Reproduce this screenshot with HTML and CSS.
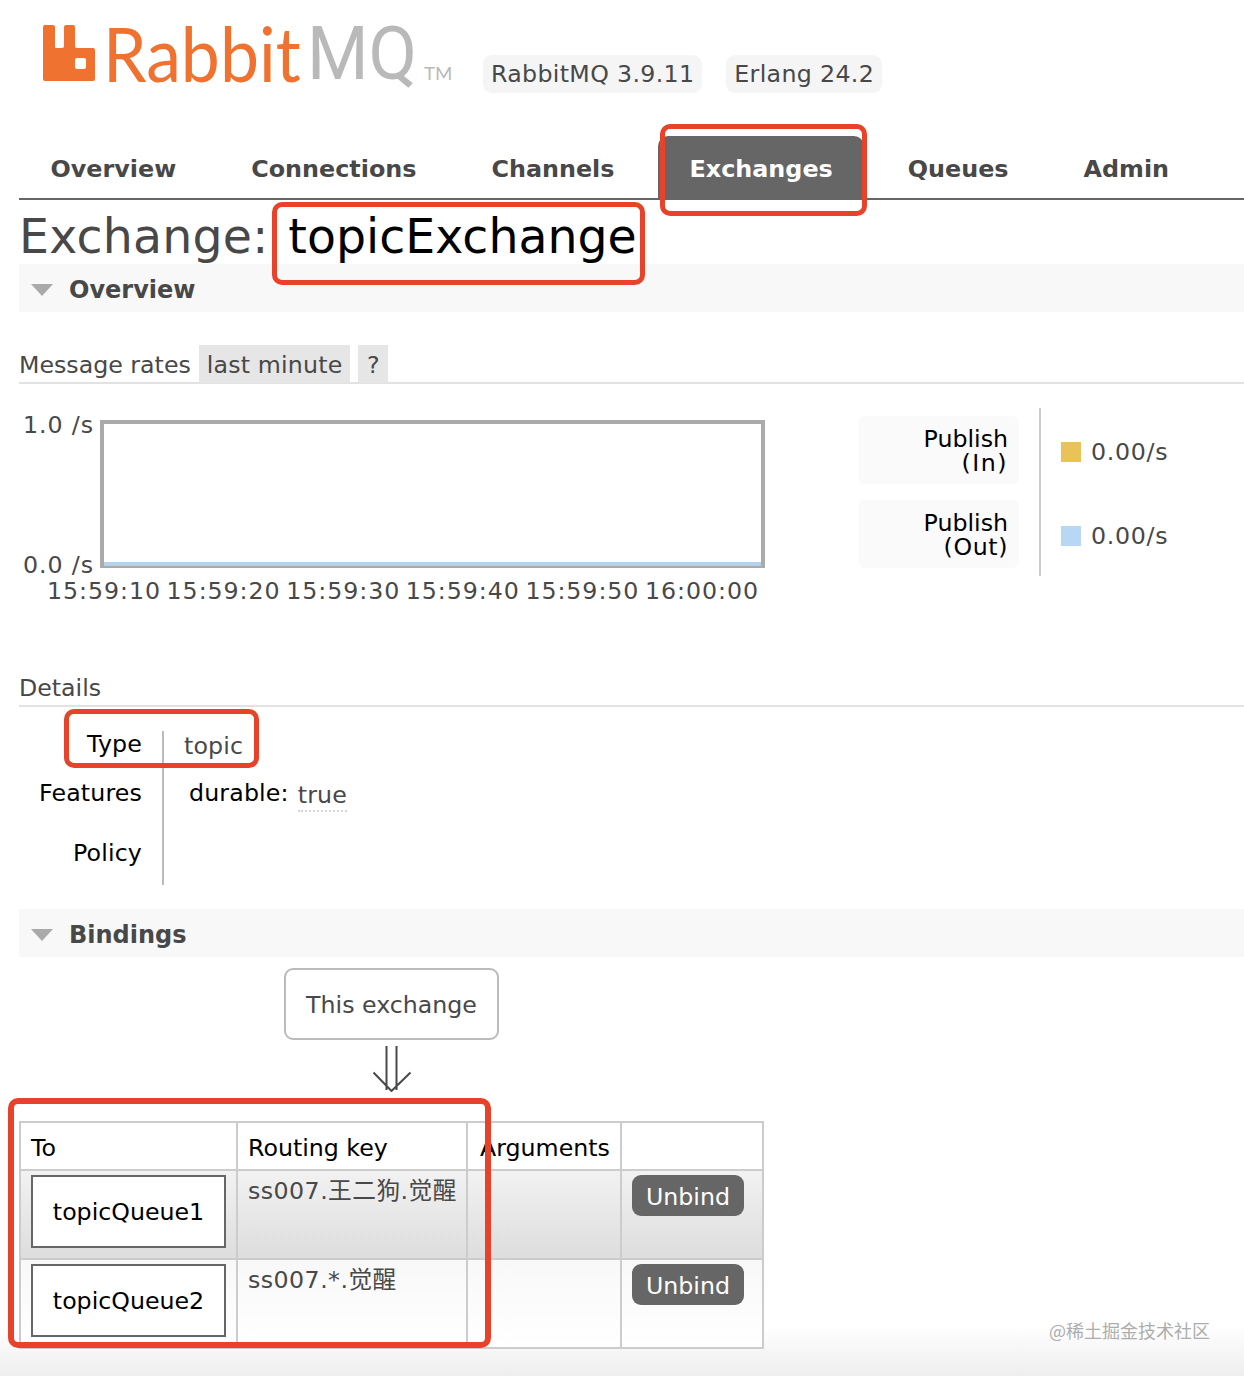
FILE: index.html
```html
<!DOCTYPE html>
<html lang="en">
<head>
<meta charset="utf-8">
<title>RabbitMQ Management</title>
<link rel="stylesheet" href="styles.css">
</head>
<body>
<div class="page">
  <header class="header">
    <div class="logo">
      <svg class="logo-icon" width="52" height="56" viewBox="0 0 52 56"><path fill="#ef7230" fill-rule="evenodd" d="M2 0h8a2 2 0 0 1 2 2v20a1 1 0 0 0 1 1h6a2 2 0 0 0 2-2V2a2 2 0 0 1 2-2h7a2 2 0 0 1 2 2v19a2 2 0 0 0 2 2h16a2 2 0 0 1 2 2v29a2 2 0 0 1-2 2H2a2 2 0 0 1-2-2V2a2 2 0 0 1 2-2zM34 33a2 2 0 0 0-2 2v7a2 2 0 0 0 2 2h7a2 2 0 0 0 2-2v-7a2 2 0 0 0-2-2z"/></svg>
      <span class="wm-rabbit">Rabbit</span>
      <span class="wm-mq">MQ</span>
      <span class="tm">TM</span>
    </div>
    <span class="badge badge-first">RabbitMQ 3.9.11</span>
    <span class="badge">Erlang 24.2</span>
  </header>

  <nav class="nav">
    <a class="nav-item">Overview</a>
    <a class="nav-item">Connections</a>
    <a class="nav-item">Channels</a>
    <a class="nav-item nav-active">Exchanges</a>
    <a class="nav-item">Queues</a>
    <a class="nav-item">Admin</a>
  </nav>

  <main class="main">
    <h1 class="title">Exchange:<b class="title-name">topicExchange</b></h1>

    <div class="section-bar"><span class="tri"></span><span class="section-label">Overview</span></div>

    <div class="sub-head sub-rates">
      <span class="rates-label">Message rates</span>
      <span class="chip chip-first">last minute</span>
      <span class="chip chip-help">?</span>
    </div>

    <div class="rates">
      <div class="chart">
        <div class="y-axis"><span>1.0 /s</span><span>0.0 /s</span></div>
        <div class="plot"></div>
        <div class="x-axis">
          <span>15:59:10</span><span>15:59:20</span><span>15:59:30</span><span>15:59:40</span><span>15:59:50</span><span>16:00:00</span>
        </div>
      </div>
      <div class="legend">
        <div class="legend-labels">
          <div class="legend-label">Publish <span class="paren-in">(In)</span></div>
          <div class="legend-label">Publish <span class="paren-out">(Out)</span></div>
        </div>
        <div class="legend-values">
          <div class="legend-value"><span class="swatch swatch-in"></span>0.00/s</div>
          <div class="legend-value"><span class="swatch swatch-out"></span>0.00/s</div>
        </div>
      </div>
    </div>

    <div class="sub-head sub-details"><span>Details</span></div>

    <div class="details">
      <div class="d-label d-r1">Type</div><div class="d-value d-r1v">topic</div>
      <div class="d-label d-r2">Features</div><div class="d-value d-r2v"><span class="d-key">durable:</span><span class="d-true">true</span></div>
      <div class="d-label d-r3">Policy</div><div class="d-value"></div>
    </div>

    <div class="section-bar section-bindings"><span class="tri"></span><span class="section-label">Bindings</span></div>

    <div class="bindings">
      <div class="this-exchange">This exchange</div>
      <svg class="arrow" width="40" height="46" viewBox="0 0 40 46"><path fill="none" stroke="#484848" stroke-width="2" d="M14.500 0v44M24.500 0v44M1.500 26.500L19.500 45L38.500 26.500"/></svg>
      <table class="bind-table">
        <colgroup><col class="c1"><col class="c2"><col class="c3"><col class="c4"></colgroup>
        <thead>
          <tr><th>To</th><th>Routing key</th><th class="th-args">Arguments</th><th></th></tr>
        </thead>
        <tbody>
          <tr class="row-alt1">
            <td class="td-queue"><div class="queue">topicQueue1</div></td>
            <td class="td-key">ss007.王二狗.觉醒</td>
            <td></td>
            <td class="td-action"><button class="unbind">Unbind</button></td>
          </tr>
          <tr class="row-alt2">
            <td class="td-queue"><div class="queue">topicQueue2</div></td>
            <td class="td-key">ss007.*.觉醒</td>
            <td></td>
            <td class="td-action"><button class="unbind">Unbind</button></td>
          </tr>
        </tbody>
      </table>
    </div>
  </main>

  <div class="mark mark-nav"></div>
  <div class="mark mark-title"></div>
  <div class="mark mark-type"></div>
  <div class="mark mark-table"></div>
  <div class="watermark">@稀土掘金技术社区</div>
</div>
</body>
</html>
```

FILE: styles.css
```css
* { box-sizing: border-box; }
html, body { margin: 0; padding: 0; }
body {
  font-family: "DejaVu Sans", "Noto Sans CJK SC", sans-serif;
  font-size: 23.7px;
  line-height: 24px;
  color: #484848;
  background: #fff;
}
.page {
  position: relative;
  height: 1376px;
  overflow: hidden;
  background: linear-gradient(to bottom, #fff 0, #fff 1325px, #eeeeee 1376px);
}

/* header */
.header {
  display: flex;
  align-items: flex-start;
  height: 135px;
  padding: 25px 0 0 43px;
}
.logo { display: flex; width: 440px; position: relative; }
.logo-icon { flex: none; }
.wm-rabbit, .wm-mq {
  display: block;
  flex: none;
  font-size: 75px;
  line-height: 56px;
  white-space: nowrap;
  transform-origin: left top;
}
.wm-rabbit {
  width: 201px;
  margin-left: 8px;
  font-family: "Lato", sans-serif;
  color: #ef7230;
  transform: scaleX(.93);
}
.wm-mq {
  margin-left: 3px;
  font-family: "Roboto", sans-serif;
  font-weight: 400;
  color: #b9b9b9;
  transform: scaleX(.94);
}
.tm {
  position: absolute;
  left: 381px;
  top: 39px;
  font-size: 17px;
  line-height: 20px;
  color: #b9b9b9;
  font-family: "Lato", sans-serif;
  transform: scaleX(1.1);
  transform-origin: left top;
}
.badge {
  display: flex;
  align-items: center;
  height: 38px;
  margin-top: 30px;
  margin-left: 24px;
  padding: 0 8px;
  background: #f5f5f5;
  border-radius: 9px;
  white-space: nowrap;
  letter-spacing: .33px;
}
.badge-first { margin-left: 0; }

/* nav */
.nav {
  display: flex;
  height: 65px;
  margin-left: 19px;
  border-bottom: 2px solid #666;
}
.nav-item {
  display: flex;
  align-items: center;
  flex: none;
  height: 64px;
  margin-top: 1px;
  padding: 2px 31.5px 0;
  margin-right: 12px;
  font-weight: bold;
  font-size: 23.85px;
  border-radius: 10px 10px 0 0;
}
.nav-active { background: #666; color: #fff; }

/* main */
.main { margin-left: 19px; }
.title {
  margin: 0;
  height: 64px;
  font-size: 47.4px;
  line-height: 74px;
  font-weight: normal;
  white-space: nowrap;
  letter-spacing: .2px;
}
.title-name { font-weight: normal; color: #000; margin-left: 20px; letter-spacing: 0; }
.section-bar {
  display: flex;
  align-items: center;
  height: 48px;
  padding-left: 12px;
  background: #f8f8f8;
  font-weight: bold;
  font-size: 24px;
}
.section-label { padding-top: 4px; }
.tri {
  width: 0;
  height: 0;
  margin-right: 16px;
  margin-top: 4px;
  border-left: 11px solid transparent;
  border-right: 11px solid transparent;
  border-top: 12px solid #aaa;
}
.sub-head {
  display: flex;
  align-items: center;
  border-bottom: 2px solid #e2e2e2;
}
.sub-rates { height: 39px; margin-top: 33px; }
.rates-label { padding-top: 2px; }
.sub-details { height: 37px; margin-top: 67px; }
.chip {
  display: flex;
  align-items: center;
  height: 38px;
  margin-left: 8px;
  padding: 2px 8px 0;
  background: #e6e6e6;
}
.chip-first { margin-left: 8px; letter-spacing: .16px; }
.chip-help { padding: 2px 8.5px 0; }

/* chart */
.rates { display: flex; align-items: flex-start; }
.chart {
  display: grid;
  grid-template-columns: 81px 665px;
  grid-template-rows: 148px auto;
  margin-top: 36px;
}
.y-axis {
  display: flex;
  flex-direction: column;
  justify-content: space-between;
  align-items: flex-end;
  margin: -7px 0 -9px;
  padding-right: 6px;
  letter-spacing: .9px;
  white-space: nowrap;
}
.plot {
  border: 4px solid #aaa;
  border-bottom-width: 2px;
  background: linear-gradient(to top, #b4d3ea 0, #b4d3ea 4px, #fff 4px);
}
.x-axis {
  grid-column: 1 / 3;
  display: flex;
  justify-content: space-between;
  margin-top: 11px;
  padding: 0 6px 0 28px;
  letter-spacing: .95px;
}
.legend { display: flex; margin-top: 24px; margin-left: 94px; }
.legend-labels, .legend-values {
  display: flex;
  flex-direction: column;
  gap: 16px;
  padding: 8px 0;
}
.legend-label {
  width: 160px;
  height: 68px;
  padding: 11px 11px 0 60px;
  text-align: right;
  color: #000;
  background: #fafafa;
  border-radius: 6px;
}
.paren-in { letter-spacing: 1.5px; }
.paren-out { letter-spacing: .6px; }
.legend-values {
  margin-left: 20px;
  padding-left: 20px;
  border-left: 2px solid #ccc;
  height: 168px;
}
.legend-value {
  display: flex;
  align-items: center;
  height: 68px;
  padding-top: 4px;
  gap: 10px;
  letter-spacing: .7px;
}
.swatch { width: 20px; height: 20px; }
.swatch-in { background: #e9c258; }
.swatch-out { background: #b7d7f4; }

/* details */
.details {
  display: grid;
  grid-template-columns: 143px 1fr;
  grid-template-rows: 37px 61px 56px;
  margin-top: 24px;
  letter-spacing: .15px;
}
.d-label { padding-right: 20px; text-align: right; color: #000; }
.d-value { padding-left: 20px; border-left: 2px solid #bbb; }
.d-r1 { padding-top: 1px; }
.d-r1v { padding-top: 3px; }
.d-r2 { padding-top: 13px; }
.d-r2v { display: flex; align-items: flex-start; padding-top: 13px; padding-left: 25px; }
.d-r3 { padding-top: 12px; }
.d-key { color: #000; }
.d-true {
  margin-left: 9px;
  padding-top: 2px;
  height: 31px;
  border-bottom: 2px dotted #d4d4d4;
}
.section-bindings { margin-top: 24px; }

/* bindings */
.bindings {
  display: flex;
  flex-direction: column;
  align-items: center;
  width: 745px;
}
.this-exchange {
  display: flex;
  align-items: center;
  justify-content: center;
  width: 215px;
  height: 72px;
  margin-top: 11px;
  padding-top: 1px;
  border: 2px solid #bbb;
  border-radius: 9px;
}
.arrow { display: block; margin-top: 6px; margin-bottom: 29px; }
.bind-table {
  width: 745px;
  table-layout: fixed;
  border-collapse: collapse;
  border: 2px solid #ccc;
}
.c1 { width: 217px; }
.c2 { width: 230px; }
.c3 { width: 154px; }
.c4 { width: 142px; }
.bind-table th, .bind-table td {
  border: 2px solid #ccc;
  padding: 0;
}
.bind-table th {
  height: 48px;
  padding: 3px 0 0 10px;
  text-align: left;
  font-weight: normal;
  color: #000;
  background: #fff;
}
.bind-table .th-args { padding-left: 12px; }
.bind-table td { height: 89px; vertical-align: top; }
.row-alt1 { background: linear-gradient(to bottom, #f2f2f2, #dddddd); }
.row-alt2 { background: linear-gradient(to bottom, #f8f8f8, #ffffff); }
.bind-table .td-queue { padding: 4px 10px 0; }
.queue {
  display: flex;
  align-items: center;
  justify-content: center;
  height: 73px;
  background: #fff;
  border: 2px solid #666;
  color: #000;
}
.bind-table .td-key { padding: 8px 0 0 10px; white-space: nowrap; letter-spacing: .45px; }
.bind-table .td-action { padding: 4px 0 0 10px; }
.unbind {
  display: block;
  width: 112px;
  height: 41px;
  padding: 2px 0 0;
  border: 0;
  border-radius: 9px;
  background: #666;
  color: #fff;
  font: inherit;
}

/* annotations laid over the screenshot */
.mark {
  position: absolute;
  border: 5px solid #e8432a;
  border-radius: 10px;
  pointer-events: none;
}
.mark-nav { left: 660px; top: 124px; width: 207px; height: 92px; }
.mark-title { left: 272px; top: 202px; width: 373px; height: 83px; }
.mark-type { left: 64px; top: 709px; width: 195px; height: 59px; }
.mark-table { left: 8px; top: 1098px; width: 483px; height: 250px; border-width: 6px; }
.watermark {
  position: absolute;
  left: 1049px;
  top: 1318px;
  font-family: "Noto Sans CJK SC", sans-serif;
  font-size: 18px;
  color: #adadad;
  white-space: nowrap;
}
```
